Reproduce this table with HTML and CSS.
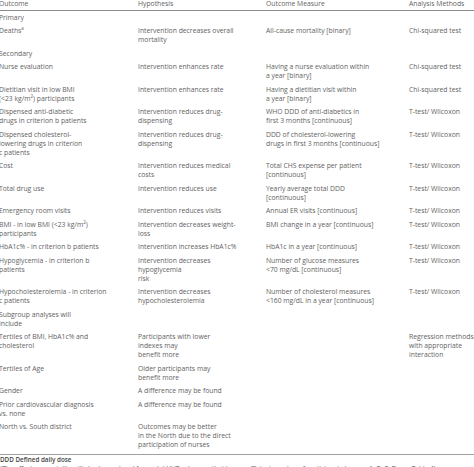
FILE: index.html
```html
<!DOCTYPE html>
<html>
<head>
<meta charset="utf-8">
<link rel="stylesheet" href="styles.css">
</head>
<body>
<div class="page">
<table class="tbl">
<colgroup><col class="c1"><col class="c2"><col class="c3"><col class="c4"></colgroup>
<thead>
<tr><th>Outcome</th><th>Hypothesis</th><th>Outcome Measure</th><th>Analysis Methods</th></tr>
</thead>
<tbody>
<tr><td>Primary</td><td></td><td></td><td></td></tr>
<tr><td>Deaths<sup>a</sup></td><td>Intervention decreases overall<br>mortality</td><td>All-cause mortality [binary]</td><td>Chi-squared test</td></tr>
<tr><td>Secondary</td><td></td><td></td><td></td></tr>
<tr><td>Nurse evaluation</td><td>Intervention enhances rate</td><td>Having a nurse evaluation within<br>a year [binary]</td><td>Chi-squared test</td></tr>
<tr><td>Dietitian visit in low BMI<br>(&lt;23 kg/m<sup>2</sup>) participants</td><td>Intervention enhances rate</td><td>Having a dietitian visit within<br>a year [binary]</td><td>Chi-squared test</td></tr>
<tr><td>Dispensed anti-diabetic<br>drugs in criterion b patients</td><td>Intervention reduces drug-<br>dispensing</td><td>WHO DDD of anti-diabetics in<br>first 3 months [continuous]</td><td>T-test/ Wilcoxon</td></tr>
<tr><td>Dispensed cholesterol-<br>lowering drugs in criterion<br>c patients</td><td>Intervention reduces drug-<br>dispensing</td><td>DDD of cholesterol-lowering<br>drugs in first 3 months [continuous]</td><td>T-test/ Wilcoxon</td></tr>
<tr><td>Cost</td><td>Intervention reduces medical<br>costs</td><td>Total CHS expense per patient<br>[continuous]</td><td>T-test/ Wilcoxon</td></tr>
<tr><td>Total drug use</td><td>Intervention reduces use</td><td>Yearly average total DDD<br>[continuous]</td><td>T-test/ Wilcoxon</td></tr>
<tr><td>Emergency room visits</td><td>Intervention reduces visits</td><td>Annual ER visits [continuous]</td><td>T-test/ Wilcoxon</td></tr>
<tr><td>BMI - in low BMI (&lt;23 kg/m<sup>2</sup>)<br>participants</td><td>Intervention decreases weight-<br>loss</td><td>BMI change in a year [continuous]</td><td>T-test/ Wilcoxon</td></tr>
<tr><td>HbA1c% - in criterion b patients</td><td>Intervention increases HbA1c%</td><td>HbA1c in a year [continuous]</td><td>T-test/ Wilcoxon</td></tr>
<tr><td>Hypoglycemia - in criterion b<br>patients</td><td>Intervention decreases<br>hypoglycemia<br>risk</td><td>Number of glucose measures<br>&lt;70 mg/dL [continuous]</td><td>T-test/ Wilcoxon</td></tr>
<tr><td>Hypocholesterolemia - in criterion<br>c patients</td><td>Intervention decreases<br>hypocholesterolemia</td><td>Number of cholesterol measures<br>&lt;160 mg/dL in a year [continuous]</td><td>T-test/ Wilcoxon</td></tr>
<tr><td>Subgroup analyses will<br>include</td><td></td><td></td><td></td></tr>
<tr><td>Tertiles of BMI, HbA1c% and<br>cholesterol</td><td>Participants with lower<br>indexes may<br>benefit more</td><td></td><td>Regression methods<br>with appropriate<br>interaction</td></tr>
<tr><td>Tertiles of Age</td><td>Older participants may<br>benefit more</td><td></td><td></td></tr>
<tr><td>Gender</td><td>A difference may be found</td><td></td><td></td></tr>
<tr><td>Prior cardiovascular diagnosis<br>vs. none</td><td>A difference may be found</td><td></td><td></td></tr>
<tr><td>North vs. South district</td><td>Outcomes may be better<br>in the North due to the direct<br>participation of nurses</td><td></td><td></td></tr>
</tbody>
</table>
<div class="foot">
<p class="abbr">DDD Defined daily dose</p>
<p class="note"><sup>a</sup>The effect on mortality will also be analysed for each LHHT subgroup that has a sufficient number of participants (groups A, B, C, D; see Table 4)</p>
</div>
</div>
</body>
</html>
```
FILE: styles.css
```css
html, body {
  margin: 0;
  padding: 0;
  background: #ffffff;
}
.page {
  width: 474px;
  height: 467px;
  overflow: hidden;
  font-family: "Open Sans", "Noto Sans", sans-serif;
  font-size: 6.8px;
  color: #636363;
}
.tbl {
  border-collapse: collapse;
  table-layout: fixed;
  width: 475px;
  margin-left: -1px;
  margin-top: -1.5px;
}
.c1 { width: 139px; }
.c2 { width: 128px; }
.c3 { width: 143px; }
.c4 { width: 65px; }
.tbl th,
.tbl td {
  padding: 2.25px 0;
  line-height: 9px;
  vertical-align: top;
  text-align: left;
  font-weight: normal;
  white-space: nowrap;
}
.tbl thead th {
  padding: 0 0 2px;
  border-bottom: 1px solid #8c8c8c;
}
sup {
  font-size: 4.5px;
  line-height: 0;
  vertical-align: 3px;
}
.foot {
  margin-top: 2px;
  border-top: 1px solid #a0a0a0;
  padding-top: 1px;
}
.abbr {
  margin: 0;
  line-height: 8.5px;
  font-size: 6.3px;
  font-weight: 600;
  color: #454545;
}
.note {
  margin: 0;
  line-height: 9px;
  font-size: 6.5px;
  color: #555;
  white-space: nowrap;
}
.note sup {
  font-size: 4.5px;
  vertical-align: 2px;
}
```
